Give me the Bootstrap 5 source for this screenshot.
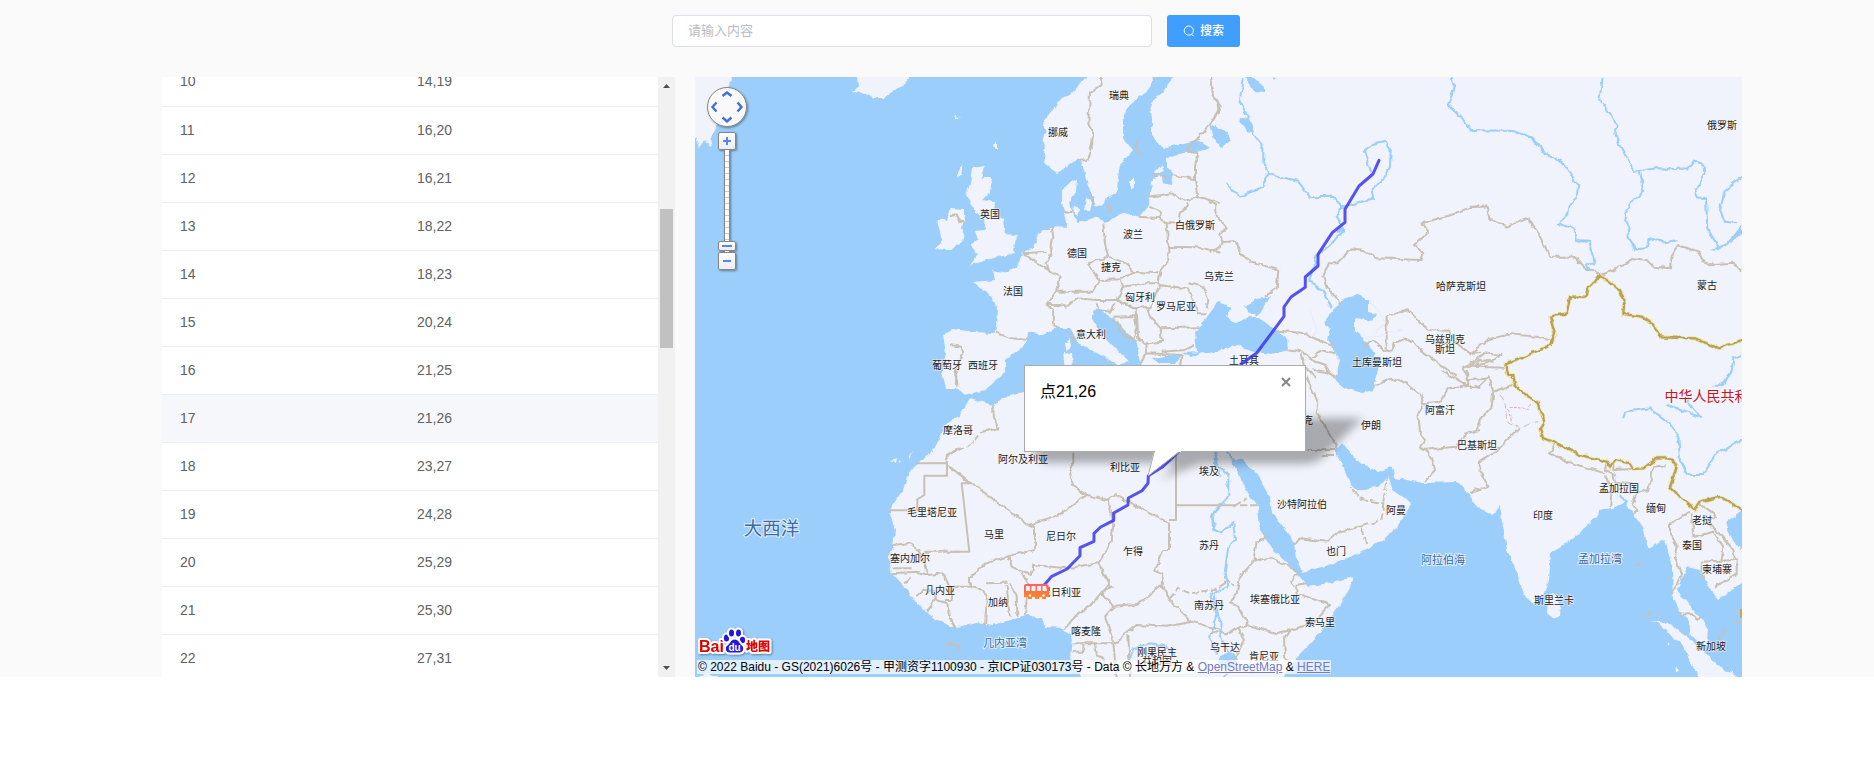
<!DOCTYPE html>
<html lang="zh-CN">

<head>
    <meta charset="UTF-8">
    <meta name="viewport" content="width=device-width, initial-scale=1.0">
    <title>轨迹查询</title>
    <link href="https://cdn.jsdelivr.net/npm/bootstrap@5.3.0/dist/css/bootstrap.min.css" rel="stylesheet">
    <style>
        body {
            font-family: "Liberation Sans", "Noto Sans CJK SC", sans-serif;
            background-color: #fff;
            overflow: hidden;
        }

        .page-main {
            height: 677px;
            background-color: #fafafa;
        }

        .search-bar {
            height: 77px;
            padding: 15px 0 0 672px;
            gap: 15px;
        }

        .search-bar .form-control {
            width: 480px;
            height: 32px;
            padding: 0 15px 2px;
            font-size: 13px;
            border: 1px solid #dcdfe6;
            border-radius: 4px;
        }

        .search-bar .form-control::placeholder {
            color: #b8bcc4;
        }

        .btn-search {
            width: 73px;
            height: 32px;
            padding: 0 0 1px;
            gap: 5px;
            font-size: 12px;
            font-weight: 500;
            color: #fff;
            background-color: #409eff;
            border: 0;
            border-radius: 3px;
        }

        .content-row {
            height: 600px;
            padding-left: 162px;
            gap: 20px;
        }

        .point-list {
            width: 513px;
        }

        .point-table {
            width: 496px;
            margin-top: -19px;
            font-size: 14px;
            line-height: 23px;
            table-layout: fixed;
        }

        .point-table td {
            height: 48px;
            padding: 12px 0 12px 18px;
            color: #606266;
            background-color: #fff;
            border-bottom: 1px solid #ebeef5;
        }

        .point-table td:first-child {
            width: 237px;
        }

        .point-table tr.current td {
            background-color: #f5f7fa;
        }

        .scroll-track {
            width: 17px;
            height: 600px;
        }

        .map-box {
            width: 1047px;
            height: 600px;
            background-color: #9bcefa;
        }

        .map-box svg {
            display: block;
        }

        .land {
            fill: #f0f3fb;
        }

        .water {
            fill: #9bcefa;
        }

        .river {
            fill: none;
            stroke: #9bcefa;
            stroke-width: 6;
        }

        .border-line {
            fill: none;
            stroke: #c8c0b2;
            stroke-width: 6;
            stroke-linejoin: round;
        }

        .china-line {
            fill: none;
            stroke: #b5a05c;
            stroke-width: 6.5;
            stroke-linejoin: round;
        }

        .map-text {
            font: 10px "Noto Sans CJK SC", sans-serif;
            text-anchor: middle;
            fill: #222;
            stroke: #f5f7fc;
            stroke-width: 1.5px;
            stroke-opacity: .7;
            paint-order: stroke;
        }

        .sea-text {
            font-size: 11px;
            fill: #3c68a8;
            stroke: #fff;
            stroke-width: 2px;
        }

        .info-window {
            left: 329px;
            top: 288px;
            width: 282px;
            height: 87px;
            padding: 12px 15px;
            font-size: 16px;
            line-height: 28px;
            color: #000;
            background-color: #fff;
            border: 1px solid #ababab;
        }

        .info-close {
            top: 11px;
            right: 14px;
        }

        .map-copy {
            left: 2px;
            bottom: 3px;
            height: 14px;
            padding-left: 1px;
            padding-right: 1px;
            font-size: 12px;
            line-height: 14px;
            color: #000;
            white-space: nowrap;
            background-color: rgba(255, 255, 255, .7);
        }

        .map-copy a {
            color: #7777cc;
        }
    </style>
</head>

<body>
    <div class="page-main">
        <!-- 搜索 -->
        <form class="search-bar d-flex">
            <input type="text" class="form-control shadow-none" placeholder="请输入内容">
            <button type="button" class="btn btn-search d-flex align-items-center justify-content-center">
                <svg width="12" height="12" viewBox="0 0 12 12" fill="none" stroke="#fff" stroke-width="1">
                    <circle cx="5.8" cy="5.6" r="4.6" />
                    <path d="M8.6 9.2l2 2" />
                </svg>
                <span>搜索</span>
            </button>
        </form>

        <div class="content-row d-flex">
            <!-- 坐标点列表 -->
            <div class="point-list d-flex overflow-hidden">
                <div class="overflow-hidden">
                    <table class="point-table">
                        <tbody id="pointBody"></tbody>
                    </table>
                </div>
                <svg class="scroll-track flex-shrink-0" viewBox="0 0 17 600">
                    <path fill="#f1f1f1" d="M0 0h17v600H0z" />
                    <path fill="#c1c1c1" d="M2 132h13v139H2z" />
                    <path fill="#505050" d="M5 11h7L8.500 7zM5 589h7l-3.500 4z" />
                </svg>
            </div>

            <!-- 地图 -->
            <div class="map-box position-relative overflow-hidden">
                <svg width="1047" height="600" viewBox="695 77 1047 600">
                    <defs>
                        <filter id="rough" x="695" y="77" width="1047" height="600" filterUnits="userSpaceOnUse">
                            <feTurbulence type="fractalNoise" baseFrequency=".13" numOctaves="2" seed="4" />
                            <feDisplacementMap in="SourceGraphic" scale="5" xChannelSelector="R" yChannelSelector="G" />
                        </filter>
                        <filter id="soft" x="-20%" y="-40%" width="140%" height="180%">
                            <feGaussianBlur stdDeviation="4" />
                        </filter>
                        <filter id="drop" x="-30%" y="-30%" width="170%" height="170%">
                            <feDropShadow dx="1" dy="1" stdDeviation="1" flood-opacity=".4" />
                        </filter>
                        <linearGradient id="busFill" x2="0" y2="1">
                            <stop stop-color="#fc6068" />
                            <stop offset="1" stop-color="#fb8a20" />
                        </linearGradient>
                        <linearGradient id="ctrlFill" x2="0" y2="1">
                            <stop stop-color="#fff" />
                            <stop offset="1" stop-color="#ececee" />
                        </linearGradient>
                    </defs>

                    <g filter="url(#rough)">
                        <path fill="#9bcefa" d="M680 60h1080v640H680z" />
                        <g class="land">
                            <!-- 格陵兰 冰岛 -->
                            <path d="M680 60H729L732 80 724 92 730 104 718 124 713 134 710 147 704 140 700 148 695 138 680 140zM855 60L858 86 852 92 866 93 874 98 883 98 892 92 904 84 911 76 911 60z" />
                            <!-- 斯堪的纳维亚 -->
                            <path d="M1092 60L1087 77 1073 93 1062 98 1052 110 1042 123 1047 132 1042 140 1046 148 1043 163 1057 173 1067 167 1078 158 1082 163 1087 182 1093 198 1094 205 1104 206 1107 198 1117 193 1118 177 1120 165 1133 150 1123 138 1123 120 1130 103 1147 92 1152 82 1150 60z" />
                            <!-- 欧亚大陆 -->
                            <path d="M1178 60L1173 77 1162 93 1150 103 1152 120 1152 135 1163 148 1183 143 1195 140 1201 142 1210 148 1197 152 1183 153 1167 158 1167 167 1173 173 1171 185 1163 183 1162 176 1153 178 1150 193 1149 205 1140 217 1123 213 1105 223 1098 216 1078 223 1073 216 1070 203 1076 192 1077 178 1070 183 1062 187 1062 203 1065 217 1067 228 1053 227 1038 233 1033 247 1022 253 1017 267 1007 273 993 270 995 280 973 282 987 292 998 307 997 330 993 333 973 332 953 329 943 335 946 353 942 372 946 388 957 388 965 395 985 390 1005 373 1005 360 1027 343 1028 332 1043 335 1058 327 1070 327 1078 343 1097 353 1117 365 1130 362 1117 350 1100 332 1091 317 1097 309 1113 318 1137 343 1140 365 1150 450 1243 460 1255 472 1270 497 1272 513 1295 543 1297 560 1302 572 1323 567 1362 552 1383 540 1397 527 1412 503 1393 490 1388 475 1377 487 1357 490 1350 483 1335 450 1343 443 1353 457 1377 472 1392 467 1395 478 1423 483 1458 482 1468 493 1478 508 1492 515 1500 505 1502 520 1507 550 1517 573 1525 597 1533 603 1542 600 1548 580 1550 552 1567 543 1597 517 1598 510 1613 508 1625 502 1635 517 1643 527 1648 548 1665 540 1672 567 1673 600 1687 620 1692 637 1707 645 1708 627 1687 603 1678 590 1687 567 1700 570 1708 585 1718 600 1742 583 1742 552 1730 535 1725 523 1742 510 1760 505V60z" />
                            <!-- 非洲 -->
                            <path d="M960 415L970 398 992 405 1005 397 1024 392 1100 400 1227 453 1237 470 1247 493 1258 507 1260 530 1275 552 1287 563 1300 577 1308 587 1333 582 1353 577 1353 581 1343 600 1320 633 1297 657 1282 680 1083 680 1070 657 1072 637 1063 628 1045 627 1042 618 1027 615 993 625 977 623 953 628 930 615 917 603 905 587 892 573 888 557 893 547 895 530 890 513 892 505 903 490 907 477 917 463 928 457 938 440 945 425z" />
                            <!-- 岛屿 -->
                            <path d="M972 168L984 166 981 178 992 178 990 192 982 200 995 202 994 211 1003 219 1005 235 1017 236 1013 250 1015 253 990 259 970 265 978 255 970 246 978 240 975 231 985 230 984 218 973 210 970 200 966 195 970 184z" />
                            <path d="M950 208L964 209 964 217 961 228 964 234 962 243 949 250 936 249 942 240 937 220 946 220z" />
                            <path d="M1086 198l6 3-2 12-6-3zM1074 206l6 2-2 8-5-3zM1130 182l4-5v8l-4 4zM1155 170l7-3 2 4-8 3zM1065 342l5-4 1 10-5 3zM1064 353l7 1 1 14-6 2zM959 168l4-3-2 10-3 2zM997 140v8l-3-3zM955 116l6 1-4 2zM1548 595l5-2 8 15-1 7-7 3-6-6zM1652 621l16 2 26 19 18 18 18 14 8 8h-37l-20-38-22-20zM1712 668l20 4 10 10h-32zM1667 640l4 5-3-1zM1675 665l4 6-3 1zM697 677l13-3 10 4zM891 461l5-2-1 5zM898 460l3 1-2 2zM908 459l4-8-2 7z" />
                        </g>
                        <g class="water">
                            <!-- 黑海 里海 -->
                            <path d="M1195 333L1207 317 1218 302 1232 308 1226 317 1236 323 1250 317 1262 320 1270 326 1287 337 1288 350 1272 354 1256 352 1238 345 1210 353 1197 352zM1245 307L1257 299 1270 297 1264 308 1256 315 1248 311zM1333 310L1345 298 1358 295 1368 300 1368 312 1377 314 1372 321 1355 318 1355 330 1366 341 1371 348 1380 362 1372 390 1362 393 1345 388 1335 380 1340 360 1335 351 1328 340 1330 330 1324 322z" />
                            <path d="M1244 77l10 1 10 9v5l-10-1zM1272 77h4l-2 3zM1216 125l12 8 2 7-9 8-8-11zM1241 116l6 2 7 15-7-2-7-9zM1210 125l8 3 4 12-8-1zM1152 358l30-4-7 10h-15zM1182 353l20-1-12 5zM1220 656l14-4 4 8-9 10-10-3z" />
                        </g>

                        <g transform="translate(950 70) scale(.33333)">
                            <path class="border-line" d="M450 0L455 45 420 70 415 160 430 185 425 230 410 270 390 272M780 20L788 75 810 115 790 150 735 215 710 235 715 245 742 250 735 290 735 330 742 380 800 395 812 400M612 318L635 315 650 320M665 315L735 328M598 380L665 370 705 392 742 382M598 410L630 425 632 445 568 440M632 445L650 460 688 460 692 430 715 400M650 460L655 530 740 532 812 545M655 530L655 570 632 600 625 645M460 460L465 520 475 560 415 580 430 610 450 630 510 628 548 605 530 580 475 560M548 605L625 610M510 628L520 650 590 640 625 640M625 645L710 655 735 700 742 730 770 730M715 640L760 650 775 690 770 715M520 650L500 690 550 715 600 710 630 648M450 630L430 665 370 665 318 665 332 620 298 605 290 580 302 550 310 500 305 470M218 550L245 570 295 600M220 550L290 545M318 665L290 705 310 720 308 760 325 775M290 705L330 705 350 710 380 685 440 690 500 690M440 700L445 720 480 725 495 700M490 740L555 738 560 770 550 810M490 745L520 790 560 815M590 710L600 740 632 775 635 815 590 820 588 850 570 885M632 775L750 772M635 845L705 840 735 825M560 715L565 810 590 825M590 850L695 855 690 885M135 788L185 805 235 810M0 825L35 830 40 850 15 900 20 930M558 210L560 235 578 252M470 410l15 0-3 17-12-2M340 422l32 6M425 380l8 22M363 790l7 25M0 440l20-10 10 25 20 5" />
                        </g>
                        <g transform="translate(1210 70) scale(.33333)">
                            <path class="border-line" d="M0 20L5 70 32 110 0 160M0 395L18 405 20 440 50 475 30 490 38 520 80 515 90 550 125 575 205 600 200 655 165 680M0 550L38 520M810 405L740 430 635 460 655 488 612 525 640 550 635 570 500 565 460 540 425 535 380 580 355 580 340 620 350 655 380 680 392 705M530 840V740L590 718 655 780 715 782 740 820 780 850 812 845M455 830L490 812 520 840 548 845 550 820 585 805 615 820 640 850 700 890 740 920M205 782L290 790 330 815 375 830M235 838L280 845 300 870 345 885 375 930M300 870L330 840 378 850M275 850L285 890 320 925M810 870L760 895 780 935M135 738l5-12" />
                            <path class="river" d="M98 21L90 90 112 140 130 190 160 235 160 280 175 310 215 325 265 335 300 382 370 380 395 412 380 440 400 480 365 520 320 560 295 630 340 660 365 715M395 412L490 385 485 360 520 330 540 290 542 240 525 215 490 225 462 245 485 310M50 340L65 360 95 378 160 350 175 310M725 21L732 50 715 105 760 145 785 185 812 180M405 478l-25 5" />
                            <path class="river" stroke-opacity=".4" d="M300 725L320 780 310 800M480 690L530 760 490 790M470 805L580 778" style="stroke-width:1.500" />
                        </g>
                        <g transform="translate(1470 70) scale(.33333)">
                            <path class="border-line" d="M0 410L50 410 58 445 110 470 175 445 205 490 240 560 310 560 350 600 375 600 390 615 430 600 490 565 530 570 550 590 600 595 605 555 625 525 690 550 700 575 720 583 790 578 816 605M240 812L200 800 120 793 55 808 0 855M0 880L40 850 95 855 50 880 0 890 105 893M20 890L25 870 70 875M0 930L60 925" />
                            <path class="river" d="M0 180L130 183 190 205 225 250 275 275 325 345 320 380 298 410 295 430 265 460 310 475 318 510 355 512 375 580 350 585 358 602M398 21L388 90 420 130 442 168 435 180 445 220 495 305 560 295 615 297 655 295 670 275 700 280 703 310 690 345 675 355 683 382 708 385 712 475 745 530M507 305L520 365 490 390 463 430 478 480 472 500 495 538 530 535 535 510 560 505 580 518 620 510M816 320L765 360 750 420 765 455 800 460M816 855L790 865 785 905 760 940" />
                            <path class="water" d="M723 538L770 520 816 465V490L785 515 748 540z" />
                            <path stroke="#efe5ad" stroke-width="12" fill="none" d="M390 615L375 635 355 655 350 680 300 680 290 730 240 740 255 790 240 825 175 855 110 880 112 910 130 930M390 615L450 660 463 690 460 732 515 740 550 765 575 802 675 805 745 835 816 810" />
                            <path class="china-line" d="M390 615L375 635 355 655 350 680 300 680 290 730 240 740 255 790 240 825 175 855 110 880 112 910 130 930M390 615L450 660 463 690 460 732 515 740 550 765 575 802 675 805 745 835 816 810" />
                        </g>
                        <g transform="translate(690 370) scale(.33333)">
                            <path class="border-line" d="M810 235L770 255V285L812 315M610 525L655 520 685 540 715 610M700 545L755 545 810 545M608 595H665M606 610L680 605 715 615 760 610 778 650 810 652M645 640L668 625M680 680L700 662 730 665 735 690 712 725M735 690L775 700 780 740 795 775M765 690L785 690 790 650M768 825L785 820 812 835M800 0L805 50" />
                        </g>
                        <g transform="translate(950 370) scale(.33333)">
                            <path class="border-line" d="M15 0L20 45M128 105L132 145 145 175 95 185M0 292L235 465 320 440 410 375 370 350 360 310 370 280V245M410 375L470 390 495 375 655 458M475 385L490 460 485 515 445 580M235 465L255 468V540L175 558M60 650L60 620 110 580 175 558M0 650L60 650 100 660 110 690 105 765M175 560L185 590 215 605 245 615M0 740L15 775M108 640L175 638M170 645L175 700 180 740M180 640L200 680 202 738M215 610L235 640 225 735M245 615L250 585 350 595 445 580 480 640 430 700 380 735 345 775M445 580L485 655 455 665 490 710 465 740 490 815M490 710L560 705 635 645 640 610 615 600 640 540H657V458M635 645L660 690 725 755 650 770 560 765 490 820M367 820H490M400 820V845H367M435 820L440 855 465 865 455 900M490 820L500 925M535 795L540 925M725 755L810 780" />
                            <path class="border-line" stroke-dasharray="20 8" d="M0 250L60 225 95 185 145 175M660 685L685 655 720 670 812 655" />
                            <path class="river" d="M540 865L550 835 600 820 650 830 680 860M790 670L800 730 780 800 800 850M812 405L785 430 790 480 812 490M800 245L795 280 812 320" />
                        </g>
                        <g transform="translate(1210 370) scale(.33333)">
                            <path class="border-line" d="M290 20L325 100 320 130 380 225 375 240 345 240 290 240M375 255L340 255M490 50L545 25 590 40 632 75 640 100 625 130 630 190 645 210 630 230 665 260 675 300 645 335M630 230L640 240 735 230 770 190 810 180M640 100L690 95 715 55 770 45 812 55M690 0L770 45M310 0L350 5 380 20M770 0L775 45M175 495L140 515 130 575 90 620 80 670 60 700 85 710 115 765 85 772M130 575L180 562 240 590 265 610 240 635 258 650 260 670 360 705 310 760 240 780 200 790 115 765M260 645L285 640M240 780L222 805 225 860 240 880M0 785L50 790 85 772 102 810 85 850 70 870M255 525L270 505 350 515 390 485 450 470M780 370L795 355 812 360M40 920L80 895 130 910" />
                            <path class="border-line" stroke-dasharray="26 7" d="M450 470L515 450 520 400 445 385 425 350M520 395L532 315M450 470L472 522M0 665L45 640V620L75 650M70 410L110 385" />
                            <path class="river" d="M50 245L85 280M15 245L20 280 55 315V380L10 430 15 480 30 490 70 460 75 510 55 530 45 600 55 650 0 675 15 720 35 760 30 805 60 850 70 870" />
                        </g>
                        <g transform="translate(1470 370) scale(.33333)">
                            <path class="border-line" d="M0 55L30 45 55 20 70 65 130 45M70 65L65 110 30 150 15 185 0 185M150 170L120 200 80 245 30 275 28 305 58 350 0 370M255 220L240 250 290 275 340 290 405 310M410 275L405 300 430 310 435 335 490 340 500 370 488 400 500 425 487 432M430 275L430 300 485 297M590 285L550 290 535 360 500 370M405 315L425 360 420 410M660 425L600 460 600 490 620 525 615 560 635 620 605 670M665 430L670 500 730 485 760 530 755 570M685 400L740 440 710 460 750 490 790 540 795 570 695 575 695 600 705 625M800 565L800 610 735 650M628 735L665 732 680 745 692 740M498 581h17M530 740l15-15M750 795l18-15M745 800v25M797 757h19" />
                            <path fill="none" stroke="#e79bbd" stroke-width="3" stroke-dasharray="8 4" d="M120 112L175 115 180 100M115 120L125 155" />
                            <path class="border-line" stroke-dasharray="20 8" d="M90 75L105 95 110 155 150 170 205 155" style="stroke-width:3" />
                            <path class="river" d="M460 145L465 125 540 115 605 165 625 205 630 270 655 315 700 315 735 255 816 210M785 0L765 40 730 50M590 105L640 120 695 145 650 95 655 80M450 375L470 400" />
                            <path stroke="#efe5ad" stroke-width="12" fill="none" d="M110 0L115 15 130 15 135 45 160 70 200 95 222 150 210 180 220 205 260 220 330 255 410 275 420 290 435 270 480 280 490 297 520 295 560 265 600 265 620 290 600 350 635 385 675 420 690 395 750 380 816 418" />
                            <path class="china-line" d="M110 0L115 15 130 15 135 45 160 70 200 95 222 150 210 180 220 205 260 220 330 255 410 275 420 290 435 270 480 280 490 297 520 295 560 265 600 265 620 290 600 350 635 385 675 420 690 395 750 380 816 418" />
                        </g>
                    </g>

                    <!-- 直线国界 -->
                    <g transform="translate(690 370) scale(.33333)">
                        <path class="border-line" d="M680 280H771V317H703V375L682 388V421H600V430" />
                    </g>
                    <g transform="translate(950 370) scale(.33333)">
                        <path class="border-line" d="M678 245V450H657M678 406H860M0 545H58L35 340H65" />
                        <path class="border-line" stroke-dasharray="22 8" d="M870 406H922" />
                    </g>

                    <g class="map-text" transform="translate(0 -.7)">
                        <text x="1119" y="100">瑞典</text>
                        <text x="1058" y="136.500">挪威</text>
                        <text x="990" y="218.500">英国</text>
                        <text x="1133" y="238.500">波兰</text>
                        <text x="1195" y="229.500">白俄罗斯</text>
                        <text x="1077" y="257.500">德国</text>
                        <text x="1111" y="271.500">捷克</text>
                        <text x="1013" y="295.500">法国</text>
                        <text x="1140" y="301.500">匈牙利</text>
                        <text x="1176" y="310.500">罗马尼亚</text>
                        <text x="1219" y="280.500">乌克兰</text>
                        <text x="1091" y="338.500">意大利</text>
                        <text x="983" y="370">西班牙</text>
                        <text x="947" y="369.500">葡萄牙</text>
                        <text x="1244" y="364.500">土耳其</text>
                        <text x="1461" y="290.500">哈萨克斯坦</text>
                        <text x="1445" y="343.500">乌兹别克</text>
                        <text x="1445" y="353.500">斯坦</text>
                        <text x="1377" y="366.500">土库曼斯坦</text>
                        <text x="1722" y="129.500">俄罗斯</text>
                        <text x="1707" y="289.500">蒙古</text>
                        <text x="958" y="434.500">摩洛哥</text>
                        <text x="1023" y="463.500">阿尔及利亚</text>
                        <text x="1125" y="471.500">利比亚</text>
                        <text x="1209" y="475.500">埃及</text>
                        <text x="932" y="516.500">毛里塔尼亚</text>
                        <text x="910" y="562.500">塞内加尔</text>
                        <text x="940" y="594.500">几内亚</text>
                        <text x="994" y="538.500">马里</text>
                        <text x="1061" y="540.500">尼日尔</text>
                        <text x="1133" y="555.500">乍得</text>
                        <text x="1209" y="549.500">苏丹</text>
                        <text x="1209" y="609.500">南苏丹</text>
                        <text x="998" y="607">加纳</text>
                        <text x="1061" y="596.500">尼日利亚</text>
                        <text x="1086" y="635.500">喀麦隆</text>
                        <text x="1157" y="656.500">刚果民主</text>
                        <text x="1157" y="666">共和国</text>
                        <text x="1225" y="652">乌干达</text>
                        <text x="1264" y="661">肯尼亚</text>
                        <text x="1320" y="626.500">索马里</text>
                        <text x="1275" y="603.500">埃塞俄比亚</text>
                        <text x="1336" y="555.500">也门</text>
                        <text x="1302" y="508.500">沙特阿拉伯</text>
                        <text x="1396" y="514.500">阿曼</text>
                        <text x="1371" y="429.500">伊朗</text>
                        <text x="1298" y="424.500">伊拉克</text>
                        <text x="1440" y="414.500">阿富汗</text>
                        <text x="1477" y="449.500">巴基斯坦</text>
                        <text x="1543" y="519.500">印度</text>
                        <text x="1619" y="492.500">孟加拉国</text>
                        <text x="1656" y="512.500">缅甸</text>
                        <text x="1702" y="524.500">老挝</text>
                        <text x="1692" y="549.500">泰国</text>
                        <text x="1717" y="573.500">柬埔寨</text>
                        <text x="1554" y="604.500">斯里兰卡</text>
                        <text x="1711" y="651">新加坡</text>
                    </g>
                    <g class="map-text sea-text" transform="translate(0 -.7)">
                        <text x="1005" y="647.500">几内亚湾</text>
                        <text x="1443" y="564.500">阿拉伯海</text>
                        <text x="1600" y="564">孟加拉湾</text>
                        <text x="771.500" y="535.500" style="font-size:18.500px">大西洋</text>
                    </g>
                    <text class="map-text" x="1664.500" y="400.500" style="font-size:14px;text-anchor:start;fill:#c8141e">中华人民共和国</text>
                    <path fill="#d0a24e" d="M1740 609h2v9h-2z" />

                    <!-- 轨迹 -->
                    <path fill="none" stroke="#3a35ee" stroke-opacity=".85" stroke-width="3" stroke-linejoin="round" stroke-linecap="round"
                        d="M1379 160.300L1373 174 1359 186 1345 209.300V222.300L1332.300 232.700 1318 254.300V266L1305.300 277V287.300L1291 297 1284 307V316.300L1256.700 353 1242.700 363 1225 385M1190 440L1172.700 457.300 1162 467.300 1148.300 475.700 1148 483.300 1142 490.700 1128.300 498 1128 505 1113.700 513V520.300L1100.700 527 1094 533.300V541.300L1080 547.700V555.700L1067 569 1051.300 576.700 1040 590" />

                    <!-- 公交车标记 -->
                    <g transform="translate(1024 584)">
                        <path fill="url(#busFill)" d="M2 0H23Q25 1 25 4V13H22V15H18V13H15V15H11V13H8V15H4V13H0V2Q0 0 2 0z" />
                        <path fill="#f4eff2" d="M2 2h4v5H2zM7.500 2h4v5h-4zM13 2h4v5h-4zM18.500 2H22l1 5h-4.500z" />
                        <circle cx="6" cy="11.500" r="1.200" fill="#fff" />
                        <circle cx="19.500" cy="11.500" r="1.200" fill="#fff" />
                    </g>

                    <!-- 信息窗阴影 -->
                    <path fill="#000" fill-opacity=".3" filter="url(#soft)" d="M1100 418H1363L1321 459Q1313 464 1303 464H1200L1160 479 1178 463H1045L1030 449z" />
                    <path fill="#fff" d="M1154 450L1148 476 1181 450z" />
                    <path fill="none" stroke="#ababab" d="M1154.500 451L1148.500 474M1151 473.500L1180 451.500" />

                    <!-- 缩放控件 -->
                    <g filter="url(#drop)" stroke="#868686">
                        <circle cx="727" cy="107" r="19.500" fill="#f9f9fa" />
                        <rect x="724.500" y="148" width="5" height="106" fill="#fff" />
                        <rect x="718.500" y="132.500" width="17" height="17" rx="1.500" fill="url(#ctrlFill)" />
                        <rect x="718.500" y="241.500" width="17" height="9" rx="1.500" fill="url(#ctrlFill)" />
                        <rect x="718.500" y="252.500" width="17" height="17" rx="1.500" fill="url(#ctrlFill)" />
                    </g>
                    <path stroke="#ccc" stroke-width="4" stroke-dasharray="1 5" d="M727 155V240" />
                    <path fill="none" stroke="#3f6fd8" stroke-width="2.400" d="M722.500 96L727 92.500 731.500 96M722.500 117.500L727 121.500 731.500 117.500M716.500 102.500L712.500 107 716.500 111.500M737.500 102.500L741.500 107 737.500 111.500" />
                    <path fill="none" stroke="#5585ee" stroke-width="2" d="M723 141H731M727 137V145M722 246H732M723 261H731" />

                    <!-- logo -->
                    <g stroke="#fff" stroke-width="4" stroke-linejoin="round" paint-order="stroke" font-weight="bold" filter="url(#drop)">
                        <text x="699" y="652" font-family="Liberation Sans, sans-serif" font-size="17" textLength="25" lengthAdjust="spacingAndGlyphs" fill="#e10602">Bai</text>
                        <text x="746" y="650.500" font-family="Noto Sans CJK SC, sans-serif" font-size="12" font-weight="900" fill="#e10602">地图</text>
                        <g fill="#2319dc">
                            <ellipse cx="726.500" cy="638" rx="2.600" ry="3.500" />
                            <ellipse cx="731.500" cy="633" rx="2.500" ry="3.600" />
                            <ellipse cx="738.500" cy="633" rx="2.500" ry="3.600" />
                            <ellipse cx="742.500" cy="640" rx="2.600" ry="3.300" />
                            <path d="M734.500 639.500Q738 639.500 739.500 643L743 647Q744 652 739.500 652.500H729.500Q725 652 726 647L730 643Q731.500 639.500 734.500 639.500z" />
                        </g>
                    </g>
                    <text x="699" y="652" font-family="Liberation Sans, sans-serif" font-size="17" font-weight="bold" textLength="25" lengthAdjust="spacingAndGlyphs" fill="#e10602" stroke="#e10602" stroke-width=".6" aria-hidden="true"></text>
                    <text x="734.500" y="650.500" text-anchor="middle" font-family="Liberation Sans, sans-serif" font-size="10" font-weight="bold" fill="#fff">du</text>
                </svg>

                <div class="info-window position-absolute">
                    点21,26
                    <svg class="info-close position-absolute" width="10" height="10" viewBox="0 0 10 10">
                        <path stroke="#858585" stroke-width="2" d="M1 1l8 8M9 1L1 9" />
                    </svg>
                </div>
                <!-- 指向标记的三角盖住下边框 -->
                <svg class="position-absolute top-0 start-0" width="490" height="376" viewBox="695 77 490 376">
                    <path fill="#fff" d="M1155 450h26v2h-26z" />
                </svg>
                <div class="map-copy position-absolute">© 2022 Baidu - GS(2021)6026号 - 甲测资字1100930 - 京ICP证030173号 - Data © 长地万方 &amp; <a href="#">OpenStreetMap</a> &amp; <a href="#">HERE</a></div>
            </div>
        </div>
    </div>

    <script src="https://cdn.jsdelivr.net/npm/bootstrap@5.3.0/dist/js/bootstrap.bundle.min.js"></script>
    <script>
        const points = [
            [10, '14,19'], [11, '16,20'], [12, '16,21'], [13, '18,22'], [14, '18,23'],
            [15, '20,24'], [16, '21,25'], [17, '21,26'], [18, '23,27'], [19, '24,28'],
            [20, '25,29'], [21, '25,30'], [22, '27,31'], [23, '28,32']
        ];
        const currentId = 17;

        document.getElementById('pointBody').innerHTML = points.map(([id, pos]) => `
            <tr class="${id === currentId ? 'current' : ''}">
                <td>${id}</td>
                <td>${pos}</td>
            </tr>`).join('');
    </script>
</body>

</html>
